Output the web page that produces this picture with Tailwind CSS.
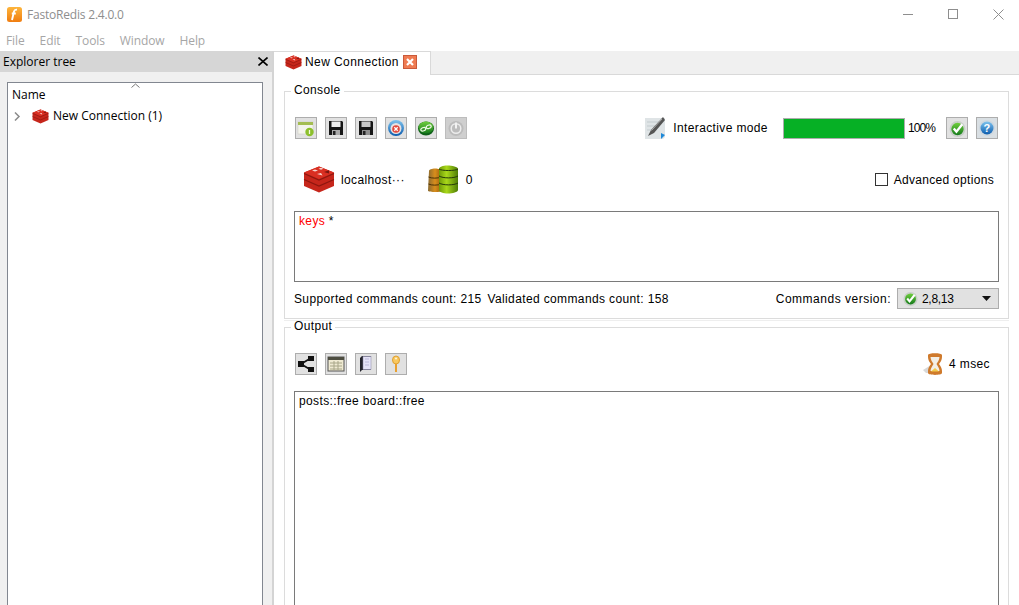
<!doctype html>
<html lang="en">
  <head>
    <meta charset="UTF-8" />
    <title>FastoRedis 2.4.0.0</title>
    <script src="https://cdn.jsdelivr.net/npm/@tailwindcss/browser@4"></script>
  </head>
  <body class="h-[605px] overflow-hidden bg-white font-['Liberation_Sans',sans-serif] text-[12px] text-black">
    <!-- shared icons -->
    <svg class="absolute w-0 h-0">
      <defs>
        <linearGradient id="gBtn" x1="0" y1="0" x2="0" y2="1"><stop offset="0" stop-color="#6fce3c" /><stop offset="1" stop-color="#157a1c" /></linearGradient>
        <linearGradient id="gBlue" x1="0" y1="0" x2="0" y2="1"><stop offset="0" stop-color="#7fc4ee" /><stop offset="1" stop-color="#0c5cae" /></linearGradient>
        <linearGradient id="gBarrel" x1="0" y1="0" x2="1" y2="0"><stop offset="0" stop-color="#6f9a08" /><stop offset="0.4" stop-color="#a9d81a" /><stop offset="1" stop-color="#4e7c06" /></linearGradient>
        <linearGradient id="gOrange" x1="0" y1="0" x2="1" y2="0"><stop offset="0" stop-color="#8a6a30" /><stop offset="0.5" stop-color="#d88e1c" /><stop offset="1" stop-color="#96590c" /></linearGradient>
        <linearGradient id="gApp" x1="0" y1="0" x2="0" y2="1"><stop offset="0" stop-color="#fdb53c" /><stop offset="1" stop-color="#f07d10" /></linearGradient>
        <symbol id="redis" viewBox="0 0 32 27">
          <path d="M1 6.500L16 .5l15 6V20l-15 6.500L1 20z" fill="#c6261b" />
          <path d="M1 6.500L16 .5l15 6-15 6.500z" fill="#d92f22" />
          <path d="M1 7.500L16 14l15-6.500M1 13.500L16 20l15-6.500" fill="none" stroke="#8e170f" stroke-width="1.200" />
          <path d="M12 3.500l3 1-3 1-3-1z M18 1.800l2.500 1-2.500 1-2.500-1z M14 8l4-1 1.500 2.500z" fill="#f6d5d0" />
          <path d="M21 6l5-1.800v3.400z" fill="#7a1610" />
        </symbol>
        <symbol id="check" viewBox="0 0 16 16">
          <circle cx="8" cy="8.500" r="7.500" fill="#c8cfc8" />
          <circle cx="8" cy="8.500" r="5.800" fill="url(#gBtn)" />
          <path d="M4.500 8l2.500 3 5.500-7" fill="none" stroke="#fff" stroke-width="2.200" />
        </symbol>
      </defs>
    </svg>

    <!-- Title bar -->
    <div class="flex items-center h-[28px] pl-[7px] font-['Open_Sans',sans-serif] text-[#8e8e8e]">
      <svg class="w-[15px] h-[15px] shrink-0" viewBox="0 0 15 15">
        <rect width="15" height="15" rx="2.500" fill="url(#gApp)" />
        <path d="M5 13l2-8.500c.3-1.300 1.400-2 3-1.800M4.800 6.500h4" fill="none" stroke="#fff" stroke-width="1.900" />
      </svg>
      <span class="ml-[5px] mr-auto pt-[2px] tracking-[-0.2px]">FastoRedis 2.4.0.0</span>
      <div class="w-[10px] h-px bg-[#8e8e8e]"></div>
      <div class="w-[10px] h-[10px] ml-[35px] border border-[#8e8e8e]"></div>
      <svg class="w-[11px] h-[11px] ml-[35px] mr-[15px]" viewBox="0 0 11 11"><path d="M.5.500l10 10M10.500.500l-10 10" stroke="#8e8e8e" /></svg>
    </div>

    <!-- Menu -->
    <div class="flex items-center gap-[15px] h-[23px] pl-[6px] pt-[2px] font-['Open_Sans',sans-serif] text-[#a6a6a6] tracking-[-0.1px]">
      <span>File</span><span>Edit</span><span>Tools</span><span>Window</span><span>Help</span>
    </div>

    <div class="flex h-[554px]">
      <!-- Explorer dock -->
      <aside class="flex flex-col w-[272px] shrink-0 bg-[#f0f0f0]">
        <div class="flex items-center justify-between h-[21px] pl-[3px] pr-[4px] bg-[#d6d6d6] font-['Open_Sans',sans-serif]">
          <span>Explorer tree</span>
          <svg class="w-[10px] h-[9px]" viewBox="0 0 10 9"><path d="M.5.500l9 8M9.500.500l-9 8" stroke="#000" stroke-width="1.600" /></svg>
        </div>
        <div class="relative flex-1 mt-[10px] ml-[7px] mr-[9px] bg-white border border-b-0 border-[#828790] font-['Open_Sans',sans-serif]">
          <svg class="absolute left-[123px] top-0 w-[9px] h-[5px]" viewBox="0 0 9 5"><path d="M.5 4.500l4-3.500 4 3.500" fill="none" stroke="#777" /></svg>
          <div class="pl-[4px] pt-[3px] h-[23px] leading-[17px]">Name</div>
          <div class="flex items-center h-[20px] pl-[6px]">
            <svg class="w-[7px] h-[9px]" viewBox="0 0 7 9"><path d="M1 .500l4 4-4 4" fill="none" stroke="#8a8a8a" stroke-width="1.500" /></svg>
            <svg class="w-[17px] h-[15px] ml-[11px]"><use href="#redis" /></svg>
            <span class="ml-[4px]">New Connection (1)</span>
          </div>
        </div>
      </aside>
      <div class="w-[2px] shrink-0 bg-[#d4d4d4]"></div>

      <!-- Tabs and panels -->
      <main class="flex-1 min-w-0 overflow-hidden">
        <div class="flex h-[24px] bg-[#f0f0f0] border-b border-[#d9d9d9]">
          <div class="flex items-center h-[24px] w-[157px] pl-[11px] pb-[3px] bg-white border-r border-t border-[#d9d9d9] tracking-[0.42px]">
            <svg class="w-[17px] h-[15px]"><use href="#redis" /></svg>
            <span class="ml-[3px]">New Connection</span>
            <svg class="w-[14px] h-[14px] ml-[4px]" viewBox="0 0 14 14">
              <rect x=".5" y=".5" width="13" height="13" fill="#ef7b52" stroke="#c9593a" />
              <path d="M4 4l6 6M10 4l-6 6" stroke="#fff" stroke-width="2.200" />
            </svg>
          </div>
        </div>

        <div class="px-[10px] pt-[8px] tracking-[0.37px]">
          <!-- Console -->
          <fieldset class="border border-[#dcdcdc] px-[9px] pb-[9px]">
            <legend class="-ml-[3px] px-[3px] h-[16px] leading-[14px]">Console</legend>
            <div class="flex items-center h-[22px] mt-[18px] pl-px">
              <div class="flex gap-[8px]">
                <button class="flex items-center justify-center w-[22px] h-[22px] bg-[#e1e1e1] border border-[#adadad]">
                  <svg class="w-[18px] h-[18px]" viewBox="0 0 18 18">
                    <rect x="1" y="3" width="15" height="12" fill="#f4f4ec" stroke="#c9c9c0" stroke-width=".5" />
                    <rect x="1" y="3" width="15" height="3" fill="#a4bd52" />
                    <circle cx="12.500" cy="13" r="4.200" fill="#8cc02c" />
                    <path d="M12.500 11v4" stroke="#f4f9df" stroke-width="1.300" />
                  </svg>
                </button>
                <button class="flex items-center justify-center w-[22px] h-[22px] bg-[#e1e1e1] border border-[#adadad]">
                  <svg class="w-[18px] h-[18px]" viewBox="0 0 18 18">
                    <path d="M2 2h13l1 1v13H2z" fill="#161616" />
                    <rect x="4.500" y="2.500" width="9" height="5.500" fill="#eee" />
                    <rect x="5" y="11" width="8" height="5" fill="#aaa" />
                    <rect x="6" y="12" width="2.500" height="4" fill="#222" />
                  </svg>
                </button>
                <button class="flex items-center justify-center w-[22px] h-[22px] bg-[#e1e1e1] border border-[#adadad]">
                  <svg class="w-[18px] h-[18px]" viewBox="0 0 18 18">
                    <path d="M2 2h13l1 1v13H2z" fill="#161616" />
                    <rect x="4.500" y="2.500" width="9" height="5.500" fill="#c8c8c8" />
                    <rect x="5" y="11" width="8" height="5" fill="#8f8f8f" />
                    <rect x="6" y="12" width="2.500" height="4" fill="#222" />
                  </svg>
                </button>
                <button class="flex items-center justify-center w-[22px] h-[22px] bg-[#e1e1e1] border border-[#adadad]">
                  <svg class="w-[18px] h-[18px]" viewBox="0 0 18 18">
                    <circle cx="9" cy="9" r="8" fill="url(#gBlue)" />
                    <circle cx="9" cy="9.500" r="5.500" fill="#e8e2e2" />
                    <circle cx="9" cy="10" r="3.800" fill="#e0483c" />
                    <path d="M7.300 8.300l3.400 3.400M10.700 8.300l-3.400 3.400" stroke="#fff" stroke-width="1.300" />
                  </svg>
                </button>
                <button class="flex items-center justify-center w-[22px] h-[22px] bg-[#e1e1e1] border border-[#adadad]">
                  <svg class="w-[18px] h-[18px]" viewBox="0 0 18 18">
                    <ellipse cx="9" cy="9.500" rx="8" ry="7" fill="#0f5f18" />
                    <ellipse cx="9" cy="8.500" rx="7.500" ry="6" fill="url(#gBtn)" />
                    <g fill="none" stroke="#eef8e4" stroke-width="1.200" transform="rotate(-25 9 9)">
                      <ellipse cx="6" cy="9" rx="2.600" ry="1.600" />
                      <ellipse cx="12" cy="9" rx="2.600" ry="1.600" />
                    </g>
                  </svg>
                </button>
                <button class="flex items-center justify-center w-[22px] h-[22px] bg-[#cfcfcf] border border-[#bdbdbd]">
                  <svg class="w-[18px] h-[18px]" viewBox="0 0 18 18">
                    <circle cx="9" cy="9.500" r="7.500" fill="#bcbcbc" />
                    <circle cx="9" cy="9.500" r="4.800" fill="none" stroke="#ececec" stroke-width="1.500" />
                    <path d="M9 3.500v6" stroke="#f2f2f2" stroke-width="2" />
                  </svg>
                </button>
              </div>

              <svg class="w-[22px] h-[24px] ml-auto" viewBox="0 0 22 24">
                <path d="M1 2h20v19l-2 2H1z" fill="#dfe4e6" />
                <path d="M3 6h14M3 10h10M3 14h7" stroke="#c3cbce" />
                <path d="M17 17v6l4-4z" fill="#1e88d8" />
                <path d="M19 1L7 14l-3 6 6-3L21 4z" fill="#555" />
                <path d="M18 3L7.500 14.500" stroke="#aaa" />
              </svg>
              <span class="ml-[7px]">Interactive mode</span>
              <div class="w-[122px] h-[21px] ml-[15px] bg-[#06b025] border border-[#adadad]"></div>
              <span class="ml-[3px] tracking-[-0.9px]">100%</span>
              <button class="flex items-center justify-center w-[22px] h-[22px] ml-[11px] bg-[#e1e1e1] border border-[#adadad]">
                <svg class="w-[17px] h-[17px]"><use href="#check" /></svg>
              </button>
              <button class="flex items-center justify-center w-[22px] h-[22px] ml-[8px] mr-px bg-[#d9dfe3] border border-[#adadad]">
                <svg class="w-[18px] h-[18px]" viewBox="0 0 18 18">
                  <circle cx="9" cy="9" r="8" fill="#cfd8df" />
                  <circle cx="9" cy="9" r="6.500" fill="url(#gBlue)" />
                  <text x="9" y="13" text-anchor="middle" font-size="11" font-weight="700" fill="#fff" font-family="Liberation Sans">?</text>
                </svg>
              </button>
            </div>

            <div class="flex items-center h-[27px] mt-[27px] pl-[9px]">
              <svg class="w-[32px] h-[27px]"><use href="#redis" /></svg>
              <span class="ml-[6px]">localhost···</span>
              <svg class="w-[31px] h-[29px] ml-[23px]" viewBox="0 0 31 29">
                <path d="M1 6c0-1.500 3-2.500 6-2.500s7 1 7 2.500v20c0 .5-3 1-6.500 1S0 26.500 0 26z" fill="url(#gOrange)" />
                <path d="M.5 12c3 1.500 9 1.500 13 0M.5 19c3 1.500 9 1.500 13 0" fill="none" stroke="#4a3006" />
                <path d="M11 4c0-2 4-3.500 8.500-3.500S30 2 30 4v21c0 2-5.500 3.500-10 3.500S11 27 11 25z" fill="url(#gBarrel)" />
                <path d="M11 4c2 2 17 2 19 0M11 11c4 2.500 15 2.500 19 0M11 18c4 2.500 15 2.500 19 0" fill="none" stroke="#24380a" />
              </svg>
              <span class="ml-[7px]">0</span>
              <label class="flex items-center ml-auto mr-[5px] tracking-[0.31px]">
                <span class="w-[13px] h-[13px] bg-white border border-[#333]"></span>
                <span class="ml-[6px]">Advanced options</span>
              </label>
            </div>

            <div class="h-[71px] mt-[18px] pl-[4px] pt-px bg-white border border-[#7a7a7a] leading-[17px]"><span class="text-[#f00]">keys</span> *</div>

            <div class="flex items-center h-[21px] mt-[6px]">
              <span>Supported commands count: 215</span>
              <span class="ml-[6px]">Validated commands count: 158</span>
              <span class="ml-auto tracking-[0.5px]">Commands version:</span>
              <div class="flex items-center w-[102px] h-[21px] ml-[6px] pl-[5px] pr-[7px] bg-[#e1e1e1] border border-[#adadad]">
                <svg class="w-[15px] h-[15px] shrink-0"><use href="#check" /></svg>
                <span class="ml-[4px] mr-auto tracking-[-0.3px]">2,8,13</span>
                <svg class="w-[9px] h-[5px]" viewBox="0 0 9 5"><path d="M0 0h9L4.500 5z" fill="#111" /></svg>
              </div>
            </div>
          </fieldset>
          <div class="h-px mt-px -mb-[2px] bg-[#eeeeee]"></div>

          <!-- Output -->
          <fieldset class="h-[300px] border border-[#dcdcdc] px-[9px]">
            <legend class="-ml-[3px] px-[3px] h-[16px] leading-[14px]">Output</legend>
            <div class="flex items-center h-[22px] mt-[18px] pl-px">
              <div class="flex gap-[8px]">
                <button class="flex items-center justify-center w-[22px] h-[22px] bg-[#e1e1e1] border border-[#adadad]">
                  <svg class="w-[18px] h-[18px]" viewBox="0 0 18 18">
                    <path d="M4 9l10-6M4 9l10 6" stroke="#111" stroke-width="1.700" />
                    <rect x="1" y="6" width="6" height="6" fill="#111" />
                    <rect x="11" y="1" width="6" height="5" fill="#111" />
                    <rect x="11" y="12" width="6" height="5" fill="#111" />
                  </svg>
                </button>
                <button class="flex items-center justify-center w-[22px] h-[22px] bg-[#e1e1e1] border border-[#adadad]">
                  <svg class="w-[18px] h-[18px]" viewBox="0 0 18 18">
                    <rect x="1" y="2" width="16" height="14" fill="#efead2" stroke="#555" />
                    <rect x="1" y="2" width="16" height="3" fill="#4d4d40" />
                    <path d="M3 8h12M3 11h12M3 14h12M7 6v9M11 6v9" stroke="#a8a688" />
                  </svg>
                </button>
                <button class="flex items-center justify-center w-[22px] h-[22px] bg-[#e1e1e1] border border-[#adadad]">
                  <svg class="w-[18px] h-[18px]" viewBox="0 0 18 18">
                    <path d="M3 3l2-2h9v14H5l-2 2z" fill="#23232b" />
                    <rect x="6" y="1.500" width="8" height="13" fill="#e4e2f6" stroke="#8a88a8" stroke-width=".5" />
                    <path d="M8 4h4M8 7h4M8 10h4" stroke="#bab8d8" />
                  </svg>
                </button>
                <button class="flex items-center justify-center w-[22px] h-[22px] bg-[#e1e1e1] border border-[#adadad]">
                  <svg class="w-[18px] h-[18px]" viewBox="0 0 18 18">
                    <ellipse cx="9" cy="5" rx="3.500" ry="4" fill="#f8c860" stroke="#e0a030" />
                    <circle cx="9" cy="3.500" r="1.100" fill="#fff3cf" />
                    <path d="M9 9v8" stroke="#e8a030" stroke-width="2" />
                  </svg>
                </button>
              </div>
              <svg class="w-[22px] h-[24px] ml-auto" viewBox="0 0 22 24">
                <path d="M1 18l8-5v8H4z" fill="#d8d8d8" />
                <path d="M6 3c0-2.500 14-2.500 14 0v2c0 3-1.500 5-3 7 1.500 2 3 4 3 7v2c0 2.500-14 2.500-14 0v-2c0-3 1.500-5 3-7-1.500-2-3-4-3-7z" fill="#cf7a2c" />
                <path d="M8.500 5h9c0 3-2 5-3 7 1 2 3 4 3 7h-9c0-3 2-5 3-7-1-2-3-4-3-7z" fill="#f3efe6" />
                <path d="M9 19.500l4-3.500 4 3.500z" fill="#f2c94a" />
              </svg>
              <span class="ml-[5px] mr-[9px]">4 msec</span>
            </div>
            <div class="h-[300px] mt-[16px] pl-[4px] pt-px bg-white border border-[#7a7a7a] leading-[17px]">posts::free board::free</div>
          </fieldset>
        </div>
      </main>
    </div>
  </body>
</html>
